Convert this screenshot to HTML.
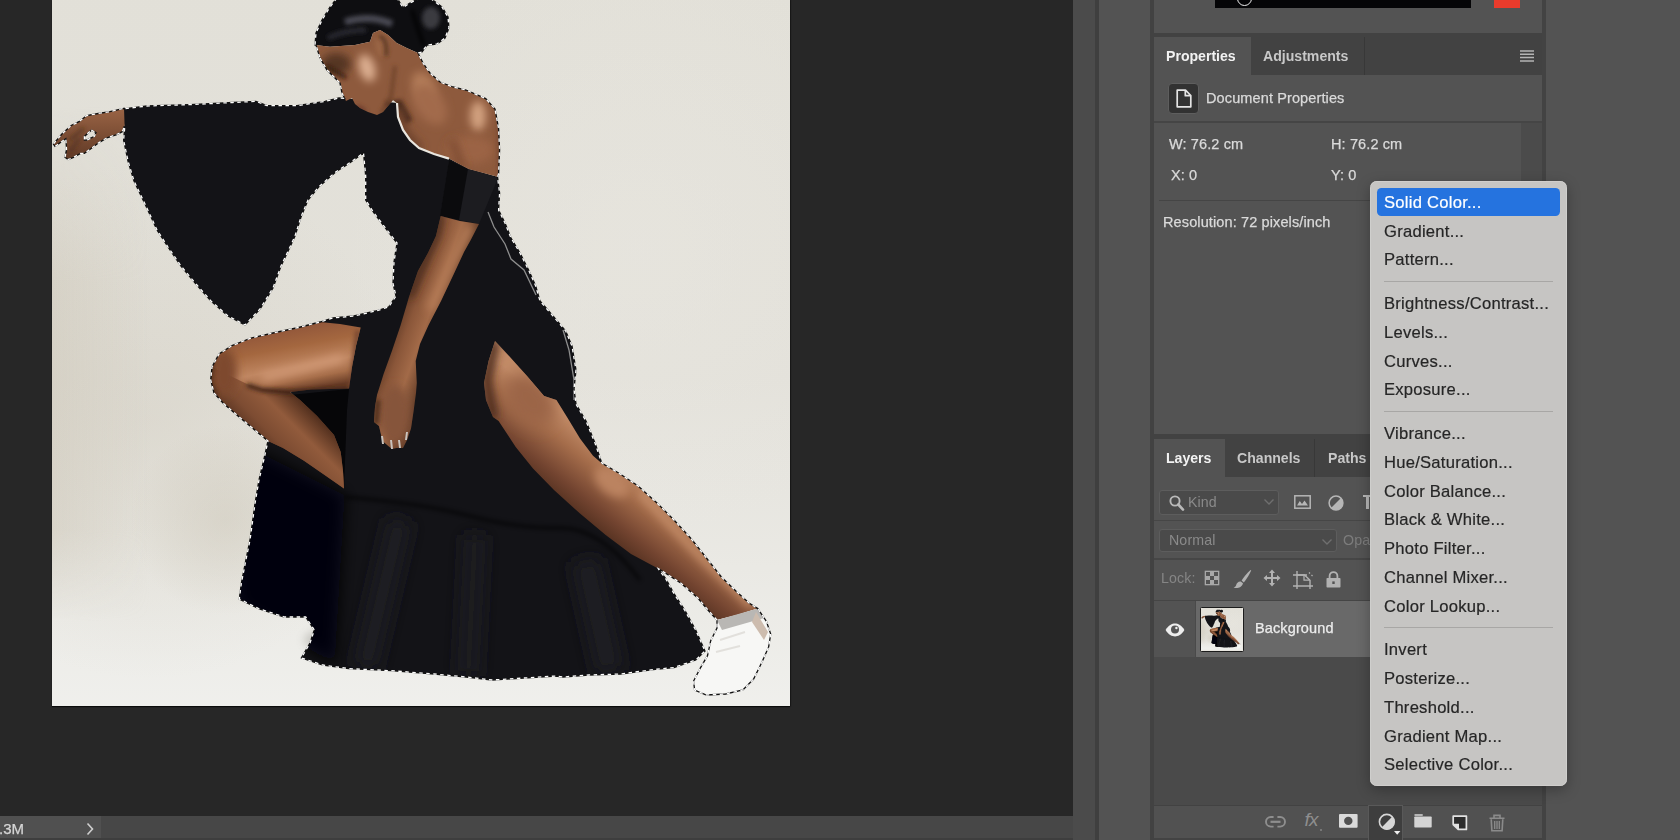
<!DOCTYPE html>
<html><head><meta charset="utf-8">
<style>
*{box-sizing:border-box;margin:0;padding:0}
html,body{width:1680px;height:840px;overflow:hidden;background:#282828;font-family:"Liberation Sans",sans-serif;}
.a{position:absolute}
#canvas{left:0;top:0;width:1073px;height:816px;background:#272727}
#photo{left:52px;top:0;width:738px;height:706px;box-shadow:0 1px 1px #0c0c0c,1px 0 1px #1a1a1a}
#hbar{left:0;top:816px;width:1073px;height:24px;background:#474747;border-bottom:2px solid #3e3e3e}
#hbar .st{left:0;top:0;width:101px;height:22px;background:#505050}
#hbar .t{left:-1px;top:3.5px;font-size:15px;color:#d6d6d6;letter-spacing:0;-webkit-text-stroke:.25px #d6d6d6}
#vbar{left:1073px;top:0;width:22px;height:840px;background:#4b4b4b}
#vline1{left:1095px;top:0;width:4px;height:840px;background:#3f3f3f}
#dock{left:1099px;top:0;width:51px;height:840px;background:#535353}
#vline2{left:1150px;top:0;width:4px;height:840px;background:#424242}
#right{left:1546px;top:0;width:134px;height:840px;background:#535353}
#vline3{left:1542px;top:0;width:4px;height:840px;background:#434343}
.panel{left:1154px;width:388px;background:#535353}
.tabbar{left:1154px;width:388px;height:38px;background:#424242}
.tab{top:0;height:38px;font-weight:bold;font-size:14.1px;color:#c8c8c8;border-right:1px solid #383838;line-height:38px}
.tab.on{background:#535353;color:#f2f2f2;border-right:none}
.tab span{position:absolute;top:0;white-space:nowrap}
.lbl{font-size:14.5px;color:#dadada;white-space:nowrap;letter-spacing:.12px;-webkit-text-stroke:.25px currentColor}
.dim{color:#8a8a8a;-webkit-text-stroke:0 !important}
.lbl,.mi,.tab span,#hbar .t{will-change:transform}
#menu{left:1369.5px;top:180.5px;width:197px;height:605px;background:#c6c5c3;border-radius:7px;box-shadow:0 0 0 .5px #d9d8d6 inset,0 4px 14px rgba(0,0,0,.28)}
#menu .hi{left:7px;top:7px;width:183px;height:28.5px;background:#2573df;border-radius:4.5px}
#menu .mi{left:14px;font-size:16.6px;color:#262626;white-space:nowrap;line-height:20px;letter-spacing:.25px;-webkit-text-stroke:.2px currentColor}
#menu .sep{left:14px;width:169px;height:1.5px;background:#a8a7a5}
</style></head><body>
<div id="canvas" class="a"></div>
<div id="photo" class="a"><!--PHOTO--><svg width="738" height="706" viewBox="52 0 738 706" style="display:block">
<defs>
<linearGradient id="bg" x1="0" y1="0" x2="0" y2="1"><stop offset="0" stop-color="#e2e0d8"/><stop offset=".55" stop-color="#e3e1da"/><stop offset=".8" stop-color="#eae9e4"/><stop offset="1" stop-color="#f0f0ed"/></linearGradient>
<radialGradient id="bgl" cx="150" cy="420" r="260" gradientUnits="userSpaceOnUse"><stop offset="0" stop-color="#c9c2b2" stop-opacity=".3"/><stop offset="1" stop-color="#c9c2b2" stop-opacity="0"/></radialGradient>
<radialGradient id="bgr" cx="640" cy="250" r="300" gradientUnits="userSpaceOnUse"><stop offset="0" stop-color="#eceae4" stop-opacity=".35"/><stop offset="1" stop-color="#eceae4" stop-opacity="0"/></radialGradient>
<linearGradient id="bge" x1="52" y1="0" x2="150" y2="0" gradientUnits="userSpaceOnUse"><stop offset="0" stop-color="#cdc7b9" stop-opacity=".5"/><stop offset="1" stop-color="#cbc4b4" stop-opacity="0"/></linearGradient>
<linearGradient id="bgem" x1="0" y1="0" x2="0" y2="706" gradientUnits="userSpaceOnUse"><stop offset=".15" stop-color="#000"/><stop offset=".4" stop-color="#fff"/><stop offset=".75" stop-color="#fff"/><stop offset=".88" stop-color="#000"/></linearGradient>
<mask id="mbge" maskUnits="userSpaceOnUse" x="52" y="-40" width="738" height="760"><rect x="52" y="-40" width="738" height="760" fill="url(#bgem)"/></mask>
<radialGradient id="bgd" cx="225" cy="520" r="95" gradientUnits="userSpaceOnUse"><stop offset="0" stop-color="#cbc5b6" stop-opacity=".45"/><stop offset="1" stop-color="#c6bfae" stop-opacity="0"/></radialGradient>
<linearGradient id="garm" x1="395" y1="300" x2="445" y2="318" gradientUnits="userSpaceOnUse"><stop offset="0" stop-color="#4a2b1b"/><stop offset=".4" stop-color="#8a5639"/><stop offset=".7" stop-color="#a26a48"/><stop offset="1" stop-color="#68402a"/></linearGradient>
<linearGradient id="gthigh" x1="285" y1="328" x2="297" y2="392" gradientUnits="userSpaceOnUse"><stop offset="0" stop-color="#91563a"/><stop offset=".3" stop-color="#a4673f"/><stop offset=".62" stop-color="#c08762"/><stop offset=".82" stop-color="#a66d49"/><stop offset="1" stop-color="#683c26"/></linearGradient>
<linearGradient id="gcalf" x1="310" y1="400" x2="258" y2="452" gradientUnits="userSpaceOnUse"><stop offset="0" stop-color="#402315"/><stop offset=".4" stop-color="#925b3c"/><stop offset=".7" stop-color="#7d4c32"/><stop offset="1" stop-color="#4e2c1c"/></linearGradient>
<linearGradient id="gleg2" x1="642" y1="476" x2="595" y2="535" gradientUnits="userSpaceOnUse"><stop offset="0" stop-color="#c28b67"/><stop offset=".3" stop-color="#a56d4b"/><stop offset=".7" stop-color="#734430"/><stop offset="1" stop-color="#4e2d1d"/></linearGradient>
<linearGradient id="ghand" x1="0" y1="0" x2="0" y2="1"><stop offset="0" stop-color="#9a6445"/><stop offset="1" stop-color="#603925"/></linearGradient>
<filter id="b2" filterUnits="userSpaceOnUse" x="0" y="-60" width="900" height="820"><feGaussianBlur stdDeviation="2"/></filter>
<filter id="b4" filterUnits="userSpaceOnUse" x="0" y="-60" width="900" height="820"><feGaussianBlur stdDeviation="4"/></filter>
<filter id="b8" filterUnits="userSpaceOnUse" x="0" y="-60" width="900" height="820"><feGaussianBlur stdDeviation="8"/></filter>
<clipPath id="cd"><path d="M122.5 109.0L147.0 106.0L190.0 104.6L233.0 102.5L256.0 101.4L267.0 105.7L297.0 105.7L325.0 101.4L339.0 98.0L370.0 100.0L397.0 103.0L398.0 117.0L403.0 130.0L410.0 140.0L419.0 148.0L434.0 154.0L449.0 158.6L468.6 169.0L497.5 176.8L499.6 193.0L498.6 210.0L505.0 223.0L511.0 238.0L520.0 253.0L528.6 270.0L535.7 286.0L540.0 301.0L553.0 316.0L565.7 331.0L572.0 346.0L576.0 370.0L574.0 389.0L576.0 404.0L586.0 421.0L595.0 443.0L601.4 462.0L630.0 520.0L659.0 570.0L665.7 578.6L674.0 593.6L685.0 610.7L695.7 630.0L705.0 651.0L695.7 660.0L674.0 667.5L653.0 669.6L620.7 674.0L588.6 675.0L563.0 677.0L556.0 676.0L524.0 678.0L492.0 680.0L466.4 677.0L434.3 674.0L391.4 670.7L348.6 668.6L322.9 665.0L301.4 658.0L310.0 643.0L314.3 630.0L305.7 617.0L284.3 617.0L258.6 608.6L239.3 599.0L241.4 583.0L245.7 561.0L250.0 540.0L251.8 527.0L255.0 503.6L259.0 480.0L263.6 460.7L268.0 441.0L290.0 395.0L320.0 322.0L333.0 318.0L354.0 316.0L375.7 311.0L388.6 307.0L396.0 296.0L393.0 283.6L394.0 262.0L397.0 243.0L387.0 230.0L374.0 213.0L365.7 200.0L365.7 176.0L363.5 153.0L348.5 163.6L335.7 172.0L318.6 187.0L308.0 200.0L301.0 217.0L295.0 236.0L290.0 247.0L281.0 266.0L273.0 288.0L260.0 309.0L245.0 325.0L228.0 316.0L211.0 301.0L196.0 284.0L181.0 266.0L168.0 247.0L157.0 230.0L145.0 204.0L134.0 181.0L128.0 161.0L123.6 140.0L124.6 129.0Z"/></clipPath>
<clipPath id="cf"><path d="M316.0 45.0L320.0 58.0L327.0 70.0L335.0 78.0L340.0 83.0L342.0 93.0L346.0 101.0L352.0 98.0L355.0 104.0L360.0 108.0L368.0 112.0L377.0 115.0L383.0 112.0L393.0 100.0L397.0 103.0L398.0 117.0L403.0 130.0L410.0 140.0L419.0 148.0L434.0 154.0L449.0 158.6L468.6 169.0L497.5 176.8L498.6 173.6L499.6 150.0L498.6 128.6L495.0 109.0L485.7 98.6L466.0 90.0L453.0 87.0L440.0 82.0L430.0 73.0L423.0 63.0L418.0 53.0L406.7 48.0L396.7 43.0L390.0 36.7L388.0 35.0L380.0 30.0L373.0 33.0L370.0 41.7L355.0 45.0L330.0 46.7Z"/></clipPath>
<clipPath id="ch"><path d="M315.0 45.0L316.0 33.0L322.0 20.0L330.0 7.0L337.0 -2.0L397.0 -2.0L403.0 7.5L410.0 3.0L420.0 -2.0L430.0 -2.0L442.0 7.0L448.0 17.0L449.0 28.0L445.0 38.0L437.0 44.0L427.0 45.0L422.0 52.0L418.0 53.0L406.7 48.0L396.7 43.0L390.0 36.7L388.0 35.0L380.0 30.0L373.0 33.0L370.0 41.7L355.0 45.0L330.0 46.7Z"/></clipPath>
<clipPath id="cl1"><path d="M320.0 322.0L298.6 327.5L273.0 333.0L251.0 338.0L232.0 345.7L219.0 354.0L212.0 367.0L210.7 380.0L214.0 393.0L223.0 403.0L238.0 416.0L253.0 428.6L268.0 441.0L283.0 448.0L304.0 460.7L325.7 475.7L344.0 488.6L343.0 471.0L340.7 452.0L334.0 435.0L317.0 416.0L300.0 400.0L290.0 392.0L311.0 389.6L349.0 388.6L352.0 367.0L356.0 345.7L360.7 327.5L340.0 324.0Z"/></clipPath>
<clipPath id="cl2"><path d="M495.0 341.0L488.6 361.0L484.0 383.0L486.0 400.0L493.0 417.0L498.6 421.0L515.7 447.0L533.0 468.6L554.0 490.0L580.0 513.6L605.7 535.0L631.0 554.0L659.0 569.0L680.7 583.0L697.8 598.0L708.6 610.7L717.0 620.0L737.0 615.0L757.8 608.6L749.0 603.0L736.4 591.4L721.4 577.0L706.4 558.0L691.4 539.0L674.0 520.0L657.0 503.0L637.8 485.7L618.6 473.0L601.4 463.0L593.0 455.7L580.0 438.6L567.0 417.0L556.4 400.0L544.0 396.0L527.0 376.0L510.0 357.0Z"/></clipPath>
<clipPath id="ca"><path d="M440.7 216.0L436.0 236.0L428.0 253.0L418.0 271.0L409.0 297.0L400.7 325.0L392.0 350.7L383.6 374.0L377.0 395.0L375.0 407.0L374.0 422.0L379.0 426.0L382.5 441.0L388.0 445.7L392.0 449.0L396.4 448.0L403.0 448.0L407.0 440.0L411.0 428.6L413.6 411.0L416.0 393.0L416.8 383.0L415.7 361.0L420.0 344.0L428.6 325.0L441.0 301.0L454.0 273.6L464.0 252.0L470.7 240.0L479.0 224.0L460.0 221.0Z"/></clipPath>
</defs>
<g id="figall">
<rect x="52" y="-40" width="738" height="760" fill="url(#bg)"/>
<rect x="52" y="-40" width="738" height="760" fill="url(#bgl)"/>
<rect x="52" y="-40" width="738" height="760" fill="url(#bgr)"/>
<rect x="52" y="-40" width="100" height="760" fill="url(#bge)" mask="url(#mbge)"/>
<rect x="120" y="400" width="220" height="240" fill="url(#bgd)"/>
<ellipse cx="338" cy="640" rx="34" ry="12" fill="#8f8d86" opacity=".4" filter="url(#b4)"/>
<path d="M122.5 109.0L147.0 106.0L190.0 104.6L233.0 102.5L256.0 101.4L267.0 105.7L297.0 105.7L325.0 101.4L339.0 98.0L370.0 100.0L397.0 103.0L398.0 117.0L403.0 130.0L410.0 140.0L419.0 148.0L434.0 154.0L449.0 158.6L468.6 169.0L497.5 176.8L499.6 193.0L498.6 210.0L505.0 223.0L511.0 238.0L520.0 253.0L528.6 270.0L535.7 286.0L540.0 301.0L553.0 316.0L565.7 331.0L572.0 346.0L576.0 370.0L574.0 389.0L576.0 404.0L586.0 421.0L595.0 443.0L601.4 462.0L630.0 520.0L659.0 570.0L665.7 578.6L674.0 593.6L685.0 610.7L695.7 630.0L705.0 651.0L695.7 660.0L674.0 667.5L653.0 669.6L620.7 674.0L588.6 675.0L563.0 677.0L556.0 676.0L524.0 678.0L492.0 680.0L466.4 677.0L434.3 674.0L391.4 670.7L348.6 668.6L322.9 665.0L301.4 658.0L310.0 643.0L314.3 630.0L305.7 617.0L284.3 617.0L258.6 608.6L239.3 599.0L241.4 583.0L245.7 561.0L250.0 540.0L251.8 527.0L255.0 503.6L259.0 480.0L263.6 460.7L268.0 441.0L290.0 395.0L320.0 322.0L333.0 318.0L354.0 316.0L375.7 311.0L388.6 307.0L396.0 296.0L393.0 283.6L394.0 262.0L397.0 243.0L387.0 230.0L374.0 213.0L365.7 200.0L365.7 176.0L363.5 153.0L348.5 163.6L335.7 172.0L318.6 187.0L308.0 200.0L301.0 217.0L295.0 236.0L290.0 247.0L281.0 266.0L273.0 288.0L260.0 309.0L245.0 325.0L228.0 316.0L211.0 301.0L196.0 284.0L181.0 266.0L168.0 247.0L157.0 230.0L145.0 204.0L134.0 181.0L128.0 161.0L123.6 140.0L124.6 129.0Z" fill="#131317"/>
<g clip-path="url(#cd)">
<path d="M236 440 L345 495 L335 665 L236 605z" fill="#050507" filter="url(#b8)"/>
<path d="M400 520 L365 668" stroke="#1c1c21" stroke-width="26" filter="url(#b8)" fill="none"/>
<path d="M475 535 L468 676" stroke="#1b1b20" stroke-width="22" filter="url(#b8)" fill="none"/>
<path d="M585 560 L610 672" stroke="#1c1c21" stroke-width="30" filter="url(#b8)" fill="none"/>
<path d="M344 497 Q420 503 470 516 T560 528 T640 580" fill="none" stroke="#040405" stroke-width="2.5" opacity=".8" filter="url(#b2)"/>
<path d="M449 160 L440 216 L479 224 L498 178z" fill="#1c1c20"/>
<path d="M449 160 L440 216 L459 220 L468 169z" fill="#0b0b0d"/>
<path d="M488 212 L494 227 L505 244 L511 259 L524 270 L536 295" fill="none" stroke="#8d8d8d" stroke-width="1.3"/>
<path d="M563 330 L569 350 L574 380 L574 400" fill="none" stroke="#8d8d8d" stroke-width="1.3"/>
<path d="M290 395 L349 389 L347 410 L344 488 L300 400z" fill="#060608"/>
</g>
<path d="M315.0 45.0L316.0 33.0L322.0 20.0L330.0 7.0L337.0 -2.0L397.0 -2.0L403.0 7.5L410.0 3.0L420.0 -2.0L430.0 -2.0L442.0 7.0L448.0 17.0L449.0 28.0L445.0 38.0L437.0 44.0L427.0 45.0L422.0 52.0L418.0 53.0L406.7 48.0L396.7 43.0L390.0 36.7L388.0 35.0L380.0 30.0L373.0 33.0L370.0 41.7L355.0 45.0L330.0 46.7Z" fill="#0e0e11"/>
<g clip-path="url(#ch)">
<path d="M345 22 Q370 14 392 24" stroke="#4a4a52" stroke-width="7" fill="none" filter="url(#b2)"/>
<path d="M328 38 Q345 30 366 30" stroke="#2a2a30" stroke-width="5" fill="none" filter="url(#b2)"/>
<ellipse cx="431" cy="18" rx="9" ry="11" fill="#3a3a41" filter="url(#b2)"/>
<path d="M412 10 Q418 30 424 46" stroke="#000" stroke-width="3" fill="none" filter="url(#b2)"/>
</g>
<path d="M316.0 45.0L320.0 58.0L327.0 70.0L335.0 78.0L340.0 83.0L342.0 93.0L346.0 101.0L352.0 98.0L355.0 104.0L360.0 108.0L368.0 112.0L377.0 115.0L383.0 112.0L393.0 100.0L397.0 103.0L398.0 117.0L403.0 130.0L410.0 140.0L419.0 148.0L434.0 154.0L449.0 158.6L468.6 169.0L497.5 176.8L498.6 173.6L499.6 150.0L498.6 128.6L495.0 109.0L485.7 98.6L466.0 90.0L453.0 87.0L440.0 82.0L430.0 73.0L423.0 63.0L418.0 53.0L406.7 48.0L396.7 43.0L390.0 36.7L388.0 35.0L380.0 30.0L373.0 33.0L370.0 41.7L355.0 45.0L330.0 46.7Z" fill="#8e5a3d"/>
<g clip-path="url(#cf)">
<ellipse cx="336" cy="64" rx="15" ry="11" fill="#553423" filter="url(#b4)"/>
<path d="M326 66 L340 74 L346 78" stroke="#2a1810" stroke-width="3" fill="none" filter="url(#b2)"/>
<ellipse cx="367" cy="68" rx="8" ry="14" transform="rotate(-18 367 68)" fill="#dcae90" filter="url(#b4)"/>
<ellipse cx="382" cy="44" rx="7" ry="13" fill="#9a6544" filter="url(#b2)"/>
<path d="M379 36 Q388 38 386 56" stroke="#4a2a1b" stroke-width="3" fill="none" filter="url(#b2)"/>
<path d="M356 106 L366 111" stroke="#6d3b2c" stroke-width="4" fill="none" filter="url(#b2)"/>
<path d="M386 106 L399 104 L409 122" stroke="#4a2c1d" stroke-width="8" fill="none" filter="url(#b2)"/>
<ellipse cx="424" cy="88" rx="11" ry="17" transform="rotate(-25 424 88)" fill="#b27b58" filter="url(#b4)"/>
<path d="M381 114 L391 97 L395 66" stroke="#6e432c" stroke-width="3.5" fill="none" filter="url(#b2)"/>
<path d="M399 108 L404 132 L420 150" stroke="#6b412b" stroke-width="9" fill="none" filter="url(#b4)"/>
<ellipse cx="430" cy="105" rx="14" ry="22" transform="rotate(-35 430 105)" fill="#a26b4b" filter="url(#b4)"/>
<ellipse cx="478" cy="116" rx="8" ry="15" fill="#d3a280" filter="url(#b4)"/>
<ellipse cx="470" cy="150" rx="24" ry="14" fill="#9b6445" filter="url(#b4)"/>
<path d="M499 110 L500 176" stroke="#7a4930" stroke-width="5" fill="none" filter="url(#b2)"/>
<path d="M452 140 L462 168" stroke="#7d4c32" stroke-width="8" fill="none" filter="url(#b4)"/>
</g>
<path d="M397 103 L398 117 L403 130 L410 140 L419 148 L434 154 L449 158.6" fill="none" stroke="#e9e6df" stroke-width="2.2"/>
<path d="M124.0 108.3L110.0 111.6L98.3 113.5L86.7 115.5L79.0 121.7L71.2 125.5L61.9 134.0L53.4 144.0L55.0 146.4L65.8 138.7L66.6 149.5L65.0 157.3L68.1 159.6L73.5 157.3L80.5 153.4L84.4 153.4L89.8 149.5L99.0 142.6L106.8 137.9L116.0 134.8L122.3 131.7L124.6 125.5ZM84.4 136.4L91.3 130.2L96.0 132.5L94.4 136.4L86.7 140.2L84.4 140.2Z" fill-rule="evenodd" fill="url(#ghand)"/>
<path d="M70 140 L84 128 M70 152 L80 138" stroke="#4a2b1c" stroke-width="2" filter="url(#b2)" fill="none"/>
<path d="M440.7 216.0L436.0 236.0L428.0 253.0L418.0 271.0L409.0 297.0L400.7 325.0L392.0 350.7L383.6 374.0L377.0 395.0L375.0 407.0L374.0 422.0L379.0 426.0L382.5 441.0L388.0 445.7L392.0 449.0L396.4 448.0L403.0 448.0L407.0 440.0L411.0 428.6L413.6 411.0L416.0 393.0L416.8 383.0L415.7 361.0L420.0 344.0L428.6 325.0L441.0 301.0L454.0 273.6L464.0 252.0L470.7 240.0L479.0 224.0L460.0 221.0Z" fill="url(#garm)"/>
<g clip-path="url(#ca)">
<path d="M470 226 L452 262 L430 310" stroke="#b57b57" stroke-width="9" fill="none" filter="url(#b4)"/>
<path d="M440 216 L436 236 L428 253 L409 297" stroke="#4a2b1b" stroke-width="8" fill="none" filter="url(#b4)"/>
<ellipse cx="395" cy="415" rx="16" ry="30" fill="#86543a" filter="url(#b4)"/>
<path d="M378 400 L376 424" stroke="#4e2d1e" stroke-width="5" fill="none" filter="url(#b2)"/>
</g>
<path d="M382 436 l1 8 M391 440 l1 9 M399 440 l1 8 M407 432 l-1 8" stroke="#c9c3bd" stroke-width="2" fill="none"/>
<path d="M320.0 322.0L298.6 327.5L273.0 333.0L251.0 338.0L232.0 345.7L219.0 354.0L212.0 367.0L210.7 380.0L214.0 393.0L223.0 403.0L238.0 416.0L253.0 428.6L268.0 441.0L283.0 448.0L304.0 460.7L325.7 475.7L344.0 488.6L343.0 471.0L340.7 452.0L334.0 435.0L317.0 416.0L300.0 400.0L290.0 392.0L311.0 389.6L349.0 388.6L352.0 367.0L356.0 345.7L360.7 327.5L340.0 324.0Z" fill="url(#gthigh)"/>
<path d="M212 367 L210.7 380 L214 393 L223 403 L238 416 L253 428.6 L268 441 L283 448 L304 460.7 L325.7 475.7 L344 488.6 L343 471 L340.7 452 L334 435 L317 416 L300 400 L290 392 L262 389 L247 384z" fill="url(#gcalf)"/>
<g clip-path="url(#cl1)">
<path d="M247 385 L262 390 L290 392 L349 389" stroke="#3e2315" stroke-width="4" fill="none" filter="url(#b2)"/>
<ellipse cx="224" cy="372" rx="13" ry="24" fill="#7e4a2e" filter="url(#b4)"/>
<path d="M213 360 L210 382 L216 396" stroke="#56321f" stroke-width="5" fill="none" filter="url(#b2)"/>
<path d="M358 330 L352 388" stroke="#7a4a30" stroke-width="6" fill="none" filter="url(#b2)"/>
<path d="M262 378 L300 369 L343 358" stroke="#d09875" stroke-width="8" fill="none" filter="url(#b4)"/>
</g>
<path d="M495.0 341.0L488.6 361.0L484.0 383.0L486.0 400.0L493.0 417.0L498.6 421.0L515.7 447.0L533.0 468.6L554.0 490.0L580.0 513.6L605.7 535.0L631.0 554.0L659.0 569.0L680.7 583.0L697.8 598.0L708.6 610.7L717.0 620.0L737.0 615.0L757.8 608.6L749.0 603.0L736.4 591.4L721.4 577.0L706.4 558.0L691.4 539.0L674.0 520.0L657.0 503.0L637.8 485.7L618.6 473.0L601.4 463.0L593.0 455.7L580.0 438.6L567.0 417.0L556.4 400.0L544.0 396.0L527.0 376.0L510.0 357.0Z" fill="url(#gleg2)"/>
<g clip-path="url(#cl2)">
<path d="M495 341 L487 380 L494 418" stroke="#4a2a1b" stroke-width="9" fill="none" filter="url(#b4)"/>
<ellipse cx="530" cy="400" rx="22" ry="30" transform="rotate(-40 530 400)" fill="#9b6546" filter="url(#b8)"/>
<ellipse cx="612" cy="482" rx="20" ry="12" transform="rotate(38 612 482)" fill="#bb8360" filter="url(#b4)"/>
<path d="M640 492 L700 556 L752 606" stroke="#c48d69" stroke-width="7" fill="none" filter="url(#b4)"/>
</g>
<path d="M717.0 620.0L737.0 615.0L757.8 608.6L766.4 621.4L770.7 634.0L768.6 647.0L762.0 662.0L753.6 679.0L742.9 690.0L725.7 694.0L706.4 695.0L694.6 690.0L693.6 681.0L700.0 668.6L707.5 655.7L710.7 640.7L717.0 628.0Z" fill="#f7f7f5"/>
<path d="M717 620 L757.8 608.6 L764 618 L722 630z" fill="#b9b7b4"/>
<path d="M756 612 L768 632 L764 640 L752 622z" fill="#cdbcae"/>
<path d="M720 640 L745 632 M716 652 L740 646" stroke="#e2e0dc" stroke-width="2" fill="none"/>
</g>
<path d="M320.0 58.0L327.0 70.0L327.0 70.0L327.0 70.0L327.0 70.0L340.0 83.0L342.0 93.0L342.0 93.0L342.0 93.0L342.0 93.0L344.7 98.4L339.0 98.0L339.0 98.0L339.0 98.0L339.0 98.0L325.0 101.4L297.0 105.7L267.0 105.7L256.0 101.4L256.0 101.4L256.0 101.4L256.0 101.4L256.0 101.4L233.0 102.5L233.0 102.5L190.0 104.6L147.0 106.0L147.0 106.0L124.0 108.8L124.0 108.3L124.0 108.3L124.0 108.3L124.0 108.3L124.0 108.3L124.0 108.3L124.0 108.3L124.0 108.3L124.0 108.3L124.0 108.3L124.0 108.3L124.0 108.3L124.0 108.3L124.0 108.3L124.0 108.3L124.0 108.3L124.0 108.3L124.0 108.3L124.0 108.3L110.0 111.6L98.3 113.5L98.3 113.5L86.7 115.5L86.7 115.5L86.7 115.5L86.7 115.5L86.7 115.5L86.7 115.5L79.0 121.7L71.2 125.5L71.2 125.5L71.2 125.5L71.2 125.5L61.9 134.0L61.9 134.0L53.4 144.0L53.4 144.0L53.4 144.0L53.4 144.0L53.4 144.0L53.4 144.0L53.4 144.0L53.4 144.0L53.4 144.0L53.4 144.0L53.4 144.0L53.4 144.0L53.4 144.0L53.4 144.0L55.0 146.4L55.0 146.4L55.0 146.4L55.0 146.4L55.0 146.4L55.0 146.4L55.0 146.4L55.0 146.4L55.0 146.4L55.0 146.4L55.0 146.4L55.0 146.4L55.0 146.4L55.0 146.4L55.0 146.4L55.0 146.4L55.0 146.4L65.8 138.7L66.6 149.5L65.0 157.3L65.0 157.3L65.0 157.3L65.0 157.3L65.0 157.3L65.0 157.3L65.0 157.3L65.0 157.3L65.0 157.3L65.0 157.3L65.0 157.3L65.0 157.3L65.0 157.3L68.1 159.6L68.1 159.6L68.1 159.6L68.1 159.6L68.1 159.6L68.1 159.6L68.1 159.6L68.1 159.6L68.1 159.6L68.1 159.6L68.1 159.6L68.1 159.6L73.5 157.3L73.5 157.3L80.5 153.4L84.4 153.4L84.4 153.4L84.4 153.4L84.4 153.4L84.4 153.4L84.4 153.4L84.4 153.4L89.8 149.5L89.8 149.5L99.0 142.6L106.8 137.9L116.0 134.8L116.0 134.8L122.3 131.7L122.3 131.7L122.3 131.7L122.3 131.7L122.3 131.7L122.3 131.7L122.3 131.7L122.3 131.7L122.3 131.7L124.3 126.3L124.6 129.0L123.6 140.0L123.6 140.0L123.6 140.0L123.6 140.0L128.0 161.0L128.0 161.0L134.0 181.0L134.0 181.0L134.0 181.0L145.0 204.0L157.0 230.0L157.0 230.0L168.0 247.0L168.0 247.0L181.0 266.0L181.0 266.0L196.0 284.0L196.0 284.0L211.0 301.0L211.0 301.0L228.0 316.0L228.0 316.0L228.0 316.0L245.0 325.0L245.0 325.0L245.0 325.0L245.0 325.0L245.0 325.0L245.0 325.0L245.0 325.0L245.0 325.0L245.0 325.0L245.0 325.0L245.0 325.0L245.0 325.0L245.0 325.0L245.0 325.0L260.0 309.0L260.0 309.0L260.0 309.0L273.0 288.0L273.0 288.0L273.0 288.0L281.0 266.0L290.0 247.0L290.0 247.0L295.0 236.0L295.0 236.0L301.0 217.0L308.0 200.0L318.6 187.0L335.7 172.0L348.5 163.6L348.5 163.6L363.5 153.0L365.7 176.0L365.7 200.0L365.7 200.0L365.7 200.0L365.7 200.0L365.7 200.0L365.7 200.0L365.7 200.0L374.0 213.0L374.0 213.0L387.0 230.0L387.0 230.0L397.0 243.0L394.0 262.0L394.0 262.0L393.0 283.6L393.0 283.6L393.0 283.6L393.0 283.6L396.0 296.0L388.6 307.0L375.7 311.0L354.0 316.0L333.0 318.0L333.0 318.0L333.0 318.0L320.0 322.0L298.6 327.5L273.0 333.0L273.0 333.0L251.0 338.0L251.0 338.0L251.0 338.0L232.0 345.7L232.0 345.7L232.0 345.7L219.0 354.0L219.0 354.0L219.0 354.0L219.0 354.0L219.0 354.0L219.0 354.0L212.0 367.0L212.0 367.0L212.0 367.0L212.0 367.0L212.0 367.0L210.7 380.0L210.7 380.0L210.7 380.0L210.7 380.0L210.7 380.0L214.0 393.0L214.0 393.0L214.0 393.0L214.0 393.0L214.0 393.0L214.0 393.0L223.0 403.0L223.0 403.0L238.0 416.0L238.0 416.0L253.0 428.6L253.0 428.6L268.0 441.0L263.6 460.7L259.0 480.0L259.0 480.0L255.0 503.6L255.0 503.6L251.8 527.0L250.0 540.0L245.7 561.0L245.7 561.0L241.4 583.0L241.4 583.0L239.3 599.0L239.3 599.0L239.3 599.0L239.3 599.0L239.3 599.0L239.3 599.0L239.3 599.0L239.3 599.0L239.3 599.0L239.3 599.0L239.3 599.0L239.3 599.0L239.3 599.0L239.3 599.0L258.6 608.6L258.6 608.6L284.3 617.0L284.3 617.0L284.3 617.0L284.3 617.0L305.7 617.0L314.3 630.0L310.0 643.0L301.4 658.0L301.4 658.0L301.4 658.0L301.4 658.0L301.4 658.0L301.4 658.0L301.4 658.0L301.4 658.0L301.4 658.0L301.4 658.0L301.4 658.0L301.4 658.0L301.4 658.0L301.4 658.0L301.4 658.0L301.4 658.0L301.4 658.0L301.4 658.0L301.4 658.0L322.9 665.0L322.9 665.0L322.9 665.0L348.6 668.6L348.6 668.6L391.4 670.7L434.3 674.0L466.4 677.0L492.0 680.0L492.0 680.0L492.0 680.0L556.0 676.0L563.0 677.0L563.0 677.0L563.0 677.0L588.6 675.0L620.7 674.0L620.7 674.0L653.0 669.6L674.0 667.5L674.0 667.5L674.0 667.5L695.7 660.0L695.7 660.0L695.7 660.0L695.7 660.0L695.7 660.0L705.0 651.0L705.0 651.0L705.0 651.0L705.0 651.0L705.0 651.0L705.0 651.0L705.0 651.0L705.0 651.0L705.0 651.0L705.0 651.0L705.0 651.0L705.0 651.0L705.0 651.0L695.7 630.0L695.7 630.0L685.0 610.7L685.0 610.7L674.0 593.6L665.7 578.6L665.7 578.6L665.7 578.6L659.0 570.0L658.2 568.6L659.0 569.0L680.7 583.0L697.8 598.0L708.6 610.7L708.6 610.7L717.0 620.0L717.0 628.0L710.7 640.7L710.7 640.7L710.7 640.7L710.7 640.7L707.5 655.7L700.0 668.6L700.0 668.6L693.6 681.0L693.6 681.0L693.6 681.0L693.6 681.0L693.6 681.0L693.6 681.0L693.6 681.0L694.6 690.0L694.6 690.0L694.6 690.0L694.6 690.0L694.6 690.0L694.6 690.0L694.6 690.0L694.6 690.0L694.6 690.0L694.6 690.0L694.6 690.0L694.6 690.0L706.4 695.0L706.4 695.0L706.4 695.0L706.4 695.0L706.4 695.0L706.4 695.0L725.7 694.0L725.7 694.0L725.7 694.0L742.9 690.0L742.9 690.0L742.9 690.0L742.9 690.0L742.9 690.0L742.9 690.0L742.9 690.0L753.6 679.0L753.6 679.0L753.6 679.0L753.6 679.0L762.0 662.0L762.0 662.0L768.6 647.0L768.6 647.0L768.6 647.0L768.6 647.0L770.7 634.0L770.7 634.0L770.7 634.0L770.7 634.0L770.7 634.0L770.7 634.0L766.4 621.4L766.4 621.4L766.4 621.4L766.4 621.4L757.8 608.6L757.8 608.6L757.8 608.6L757.8 608.6L757.8 608.6L757.8 608.6L757.8 608.6L757.8 608.6L757.8 608.6L757.8 608.6L757.8 608.6L757.8 608.6L757.8 608.6L757.8 608.6L757.8 608.6L757.8 608.6L757.8 608.6L757.8 608.6L757.8 608.6L749.0 603.0L736.4 591.4L721.4 577.0L691.4 539.0L691.4 539.0L674.0 520.0L674.0 520.0L657.0 503.0L657.0 503.0L637.8 485.7L637.8 485.7L637.8 485.7L618.6 473.0L618.6 473.0L602.1 463.4L601.4 462.0L595.0 443.0L595.0 443.0L586.0 421.0L586.0 421.0L576.0 404.0L574.0 389.0L576.0 370.0L576.0 370.0L576.0 370.0L576.0 370.0L572.0 346.0L572.0 346.0L572.0 346.0L565.7 331.0L565.7 331.0L565.7 331.0L565.7 331.0L553.0 316.0L553.0 316.0L540.0 301.0L535.7 286.0L535.7 286.0L528.6 270.0L528.6 270.0L520.0 253.0L520.0 253.0L511.0 238.0L505.0 223.0L505.0 223.0L498.6 210.0L499.6 193.0L499.6 193.0L499.6 193.0L497.5 176.8L498.6 173.6L498.6 173.6L498.6 173.6L498.6 173.6L499.6 150.0L499.6 150.0L498.6 128.6L498.6 128.6L495.0 109.0L495.0 109.0L495.0 109.0L495.0 109.0L495.0 109.0L495.0 109.0L495.0 109.0L485.7 98.6L485.7 98.6L485.7 98.6L485.7 98.6L485.7 98.6L466.0 90.0L466.0 90.0L466.0 90.0L453.0 87.0L440.0 82.0L430.0 73.0L423.0 63.0L418.0 53.0L422.0 52.0L422.0 52.0L422.0 52.0L422.0 52.0L422.0 52.0L422.0 52.0L422.0 52.0L422.0 52.0L427.0 45.0L437.0 44.0L437.0 44.0L437.0 44.0L437.0 44.0L437.0 44.0L437.0 44.0L437.0 44.0L445.0 38.0L445.0 38.0L445.0 38.0L445.0 38.0L445.0 38.0L445.0 38.0L445.0 38.0L449.0 28.0L449.0 28.0L449.0 28.0L449.0 28.0L449.0 28.0L449.0 28.0L448.0 17.0L448.0 17.0L448.0 17.0L448.0 17.0L448.0 17.0L448.0 17.0L442.0 7.0L442.0 7.0L442.0 7.0L442.0 7.0L442.0 7.0L430.0 -2.0L430.0 -2.0L430.0 -2.0L430.0 -2.0L430.0 -2.0L430.0 -2.0L430.0 -2.0L430.0 -2.0L420.0 -2.0L420.0 -2.0L420.0 -2.0L420.0 -2.0L420.0 -2.0L420.0 -2.0L410.0 3.0L410.0 3.0L403.0 7.5L397.0 -2.0L397.0 -2.0L397.0 -2.0L397.0 -2.0L397.0 -2.0L397.0 -2.0L397.0 -2.0L397.0 -2.0L397.0 -2.0L397.0 -2.0L397.0 -2.0L337.0 -2.0L337.0 -2.0L337.0 -2.0L337.0 -2.0L337.0 -2.0L337.0 -2.0L337.0 -2.0L337.0 -2.0L337.0 -2.0L337.0 -2.0L330.0 7.0L330.0 7.0L322.0 20.0L322.0 20.0L316.0 33.0L316.0 33.0L316.0 33.0L316.0 33.0L316.0 33.0L315.0 45.0L315.0 45.0L315.0 45.0L315.0 45.0L315.0 45.0L315.0 45.0L315.0 45.0L315.0 45.0L315.0 45.0L315.0 45.0L315.0 45.0L315.0 45.0L315.0 45.0L315.0 45.0L315.0 45.0L315.0 45.0L315.0 45.0L316.0 45.1L320.0 58.0L320.0 58.0ZM91.3 130.2L96.0 132.5L94.4 136.4L86.7 140.2L84.4 140.2L84.4 136.4Z" fill="none" stroke="#111" stroke-width="1.3"/>
<path d="M320.0 58.0L327.0 70.0L327.0 70.0L327.0 70.0L327.0 70.0L340.0 83.0L342.0 93.0L342.0 93.0L342.0 93.0L342.0 93.0L344.7 98.4L339.0 98.0L339.0 98.0L339.0 98.0L339.0 98.0L325.0 101.4L297.0 105.7L267.0 105.7L256.0 101.4L256.0 101.4L256.0 101.4L256.0 101.4L256.0 101.4L233.0 102.5L233.0 102.5L190.0 104.6L147.0 106.0L147.0 106.0L124.0 108.8L124.0 108.3L124.0 108.3L124.0 108.3L124.0 108.3L124.0 108.3L124.0 108.3L124.0 108.3L124.0 108.3L124.0 108.3L124.0 108.3L124.0 108.3L124.0 108.3L124.0 108.3L124.0 108.3L124.0 108.3L124.0 108.3L124.0 108.3L124.0 108.3L124.0 108.3L110.0 111.6L98.3 113.5L98.3 113.5L86.7 115.5L86.7 115.5L86.7 115.5L86.7 115.5L86.7 115.5L86.7 115.5L79.0 121.7L71.2 125.5L71.2 125.5L71.2 125.5L71.2 125.5L61.9 134.0L61.9 134.0L53.4 144.0L53.4 144.0L53.4 144.0L53.4 144.0L53.4 144.0L53.4 144.0L53.4 144.0L53.4 144.0L53.4 144.0L53.4 144.0L53.4 144.0L53.4 144.0L53.4 144.0L53.4 144.0L55.0 146.4L55.0 146.4L55.0 146.4L55.0 146.4L55.0 146.4L55.0 146.4L55.0 146.4L55.0 146.4L55.0 146.4L55.0 146.4L55.0 146.4L55.0 146.4L55.0 146.4L55.0 146.4L55.0 146.4L55.0 146.4L55.0 146.4L65.8 138.7L66.6 149.5L65.0 157.3L65.0 157.3L65.0 157.3L65.0 157.3L65.0 157.3L65.0 157.3L65.0 157.3L65.0 157.3L65.0 157.3L65.0 157.3L65.0 157.3L65.0 157.3L65.0 157.3L68.1 159.6L68.1 159.6L68.1 159.6L68.1 159.6L68.1 159.6L68.1 159.6L68.1 159.6L68.1 159.6L68.1 159.6L68.1 159.6L68.1 159.6L68.1 159.6L73.5 157.3L73.5 157.3L80.5 153.4L84.4 153.4L84.4 153.4L84.4 153.4L84.4 153.4L84.4 153.4L84.4 153.4L84.4 153.4L89.8 149.5L89.8 149.5L99.0 142.6L106.8 137.9L116.0 134.8L116.0 134.8L122.3 131.7L122.3 131.7L122.3 131.7L122.3 131.7L122.3 131.7L122.3 131.7L122.3 131.7L122.3 131.7L122.3 131.7L124.3 126.3L124.6 129.0L123.6 140.0L123.6 140.0L123.6 140.0L123.6 140.0L128.0 161.0L128.0 161.0L134.0 181.0L134.0 181.0L134.0 181.0L145.0 204.0L157.0 230.0L157.0 230.0L168.0 247.0L168.0 247.0L181.0 266.0L181.0 266.0L196.0 284.0L196.0 284.0L211.0 301.0L211.0 301.0L228.0 316.0L228.0 316.0L228.0 316.0L245.0 325.0L245.0 325.0L245.0 325.0L245.0 325.0L245.0 325.0L245.0 325.0L245.0 325.0L245.0 325.0L245.0 325.0L245.0 325.0L245.0 325.0L245.0 325.0L245.0 325.0L245.0 325.0L260.0 309.0L260.0 309.0L260.0 309.0L273.0 288.0L273.0 288.0L273.0 288.0L281.0 266.0L290.0 247.0L290.0 247.0L295.0 236.0L295.0 236.0L301.0 217.0L308.0 200.0L318.6 187.0L335.7 172.0L348.5 163.6L348.5 163.6L363.5 153.0L365.7 176.0L365.7 200.0L365.7 200.0L365.7 200.0L365.7 200.0L365.7 200.0L365.7 200.0L365.7 200.0L374.0 213.0L374.0 213.0L387.0 230.0L387.0 230.0L397.0 243.0L394.0 262.0L394.0 262.0L393.0 283.6L393.0 283.6L393.0 283.6L393.0 283.6L396.0 296.0L388.6 307.0L375.7 311.0L354.0 316.0L333.0 318.0L333.0 318.0L333.0 318.0L320.0 322.0L298.6 327.5L273.0 333.0L273.0 333.0L251.0 338.0L251.0 338.0L251.0 338.0L232.0 345.7L232.0 345.7L232.0 345.7L219.0 354.0L219.0 354.0L219.0 354.0L219.0 354.0L219.0 354.0L219.0 354.0L212.0 367.0L212.0 367.0L212.0 367.0L212.0 367.0L212.0 367.0L210.7 380.0L210.7 380.0L210.7 380.0L210.7 380.0L210.7 380.0L214.0 393.0L214.0 393.0L214.0 393.0L214.0 393.0L214.0 393.0L214.0 393.0L223.0 403.0L223.0 403.0L238.0 416.0L238.0 416.0L253.0 428.6L253.0 428.6L268.0 441.0L263.6 460.7L259.0 480.0L259.0 480.0L255.0 503.6L255.0 503.6L251.8 527.0L250.0 540.0L245.7 561.0L245.7 561.0L241.4 583.0L241.4 583.0L239.3 599.0L239.3 599.0L239.3 599.0L239.3 599.0L239.3 599.0L239.3 599.0L239.3 599.0L239.3 599.0L239.3 599.0L239.3 599.0L239.3 599.0L239.3 599.0L239.3 599.0L239.3 599.0L258.6 608.6L258.6 608.6L284.3 617.0L284.3 617.0L284.3 617.0L284.3 617.0L305.7 617.0L314.3 630.0L310.0 643.0L301.4 658.0L301.4 658.0L301.4 658.0L301.4 658.0L301.4 658.0L301.4 658.0L301.4 658.0L301.4 658.0L301.4 658.0L301.4 658.0L301.4 658.0L301.4 658.0L301.4 658.0L301.4 658.0L301.4 658.0L301.4 658.0L301.4 658.0L301.4 658.0L301.4 658.0L322.9 665.0L322.9 665.0L322.9 665.0L348.6 668.6L348.6 668.6L391.4 670.7L434.3 674.0L466.4 677.0L492.0 680.0L492.0 680.0L492.0 680.0L556.0 676.0L563.0 677.0L563.0 677.0L563.0 677.0L588.6 675.0L620.7 674.0L620.7 674.0L653.0 669.6L674.0 667.5L674.0 667.5L674.0 667.5L695.7 660.0L695.7 660.0L695.7 660.0L695.7 660.0L695.7 660.0L705.0 651.0L705.0 651.0L705.0 651.0L705.0 651.0L705.0 651.0L705.0 651.0L705.0 651.0L705.0 651.0L705.0 651.0L705.0 651.0L705.0 651.0L705.0 651.0L705.0 651.0L695.7 630.0L695.7 630.0L685.0 610.7L685.0 610.7L674.0 593.6L665.7 578.6L665.7 578.6L665.7 578.6L659.0 570.0L658.2 568.6L659.0 569.0L680.7 583.0L697.8 598.0L708.6 610.7L708.6 610.7L717.0 620.0L717.0 628.0L710.7 640.7L710.7 640.7L710.7 640.7L710.7 640.7L707.5 655.7L700.0 668.6L700.0 668.6L693.6 681.0L693.6 681.0L693.6 681.0L693.6 681.0L693.6 681.0L693.6 681.0L693.6 681.0L694.6 690.0L694.6 690.0L694.6 690.0L694.6 690.0L694.6 690.0L694.6 690.0L694.6 690.0L694.6 690.0L694.6 690.0L694.6 690.0L694.6 690.0L694.6 690.0L706.4 695.0L706.4 695.0L706.4 695.0L706.4 695.0L706.4 695.0L706.4 695.0L725.7 694.0L725.7 694.0L725.7 694.0L742.9 690.0L742.9 690.0L742.9 690.0L742.9 690.0L742.9 690.0L742.9 690.0L742.9 690.0L753.6 679.0L753.6 679.0L753.6 679.0L753.6 679.0L762.0 662.0L762.0 662.0L768.6 647.0L768.6 647.0L768.6 647.0L768.6 647.0L770.7 634.0L770.7 634.0L770.7 634.0L770.7 634.0L770.7 634.0L770.7 634.0L766.4 621.4L766.4 621.4L766.4 621.4L766.4 621.4L757.8 608.6L757.8 608.6L757.8 608.6L757.8 608.6L757.8 608.6L757.8 608.6L757.8 608.6L757.8 608.6L757.8 608.6L757.8 608.6L757.8 608.6L757.8 608.6L757.8 608.6L757.8 608.6L757.8 608.6L757.8 608.6L757.8 608.6L757.8 608.6L757.8 608.6L749.0 603.0L736.4 591.4L721.4 577.0L691.4 539.0L691.4 539.0L674.0 520.0L674.0 520.0L657.0 503.0L657.0 503.0L637.8 485.7L637.8 485.7L637.8 485.7L618.6 473.0L618.6 473.0L602.1 463.4L601.4 462.0L595.0 443.0L595.0 443.0L586.0 421.0L586.0 421.0L576.0 404.0L574.0 389.0L576.0 370.0L576.0 370.0L576.0 370.0L576.0 370.0L572.0 346.0L572.0 346.0L572.0 346.0L565.7 331.0L565.7 331.0L565.7 331.0L565.7 331.0L553.0 316.0L553.0 316.0L540.0 301.0L535.7 286.0L535.7 286.0L528.6 270.0L528.6 270.0L520.0 253.0L520.0 253.0L511.0 238.0L505.0 223.0L505.0 223.0L498.6 210.0L499.6 193.0L499.6 193.0L499.6 193.0L497.5 176.8L498.6 173.6L498.6 173.6L498.6 173.6L498.6 173.6L499.6 150.0L499.6 150.0L498.6 128.6L498.6 128.6L495.0 109.0L495.0 109.0L495.0 109.0L495.0 109.0L495.0 109.0L495.0 109.0L495.0 109.0L485.7 98.6L485.7 98.6L485.7 98.6L485.7 98.6L485.7 98.6L466.0 90.0L466.0 90.0L466.0 90.0L453.0 87.0L440.0 82.0L430.0 73.0L423.0 63.0L418.0 53.0L422.0 52.0L422.0 52.0L422.0 52.0L422.0 52.0L422.0 52.0L422.0 52.0L422.0 52.0L422.0 52.0L427.0 45.0L437.0 44.0L437.0 44.0L437.0 44.0L437.0 44.0L437.0 44.0L437.0 44.0L437.0 44.0L445.0 38.0L445.0 38.0L445.0 38.0L445.0 38.0L445.0 38.0L445.0 38.0L445.0 38.0L449.0 28.0L449.0 28.0L449.0 28.0L449.0 28.0L449.0 28.0L449.0 28.0L448.0 17.0L448.0 17.0L448.0 17.0L448.0 17.0L448.0 17.0L448.0 17.0L442.0 7.0L442.0 7.0L442.0 7.0L442.0 7.0L442.0 7.0L430.0 -2.0L430.0 -2.0L430.0 -2.0L430.0 -2.0L430.0 -2.0L430.0 -2.0L430.0 -2.0L430.0 -2.0L420.0 -2.0L420.0 -2.0L420.0 -2.0L420.0 -2.0L420.0 -2.0L420.0 -2.0L410.0 3.0L410.0 3.0L403.0 7.5L397.0 -2.0L397.0 -2.0L397.0 -2.0L397.0 -2.0L397.0 -2.0L397.0 -2.0L397.0 -2.0L397.0 -2.0L397.0 -2.0L397.0 -2.0L397.0 -2.0L337.0 -2.0L337.0 -2.0L337.0 -2.0L337.0 -2.0L337.0 -2.0L337.0 -2.0L337.0 -2.0L337.0 -2.0L337.0 -2.0L337.0 -2.0L330.0 7.0L330.0 7.0L322.0 20.0L322.0 20.0L316.0 33.0L316.0 33.0L316.0 33.0L316.0 33.0L316.0 33.0L315.0 45.0L315.0 45.0L315.0 45.0L315.0 45.0L315.0 45.0L315.0 45.0L315.0 45.0L315.0 45.0L315.0 45.0L315.0 45.0L315.0 45.0L315.0 45.0L315.0 45.0L315.0 45.0L315.0 45.0L315.0 45.0L315.0 45.0L316.0 45.1L320.0 58.0L320.0 58.0ZM91.3 130.2L96.0 132.5L94.4 136.4L86.7 140.2L84.4 140.2L84.4 136.4Z" fill="none" stroke="#fff" stroke-width="1.3" stroke-dasharray="3.5 3.5"/>
</svg><!--/PHOTO--></div>
<div id="hbar" class="a"><div class="st a"></div><div class="t a">.3M</div>
<svg class="a" style="left:84.5px;top:6px" width="10" height="14" viewBox="0 0 10 14"><path d="M2.5 1.5 L7.5 7 L2.5 12.5" fill="none" stroke="#cfcfcf" stroke-width="1.6"/></svg></div>
<div id="vbar" class="a"></div><div id="vline1" class="a"></div><div id="dock" class="a"></div><div id="vline2" class="a"></div>
<div id="right" class="a"></div><div id="vline3" class="a"></div>

<!-- top panel fragment -->
<div class="panel a" style="top:0;height:33px"></div>
<div class="a" style="left:1215px;top:0;width:256px;height:8px;background:#050507"></div>
<div class="a" style="left:1494px;top:0;width:26px;height:8px;background:#e93b2c"></div>
<div class="a" style="left:1237px;top:-9px;width:15px;height:15px;border:1.5px solid #f0f0f0;border-radius:50%"></div>
<div class="a" style="left:1154px;top:33px;width:388px;height:4px;background:#424242"></div>

<!-- Properties panel -->
<div class="tabbar a" style="top:37px">
 <div class="tab on a" style="left:0;width:97px"><span style="left:12px">Properties</span></div>
 <div class="tab a" style="left:97px;width:114px"><span style="left:11.5px">Adjustments</span></div>
 <svg class="a" style="left:366px;top:13px" width="14" height="12" viewBox="0 0 14 12"><path d="M0 1h14M0 4.3h14M0 7.6h14M0 10.9h14" stroke="#b4b4b4" stroke-width="1.5"/></svg>
</div>
<div class="panel a" style="top:75px;height:359px"></div>
<div class="a" style="left:1154px;top:121px;width:388px;height:1.5px;background:#454545"></div>
<div class="a" style="left:1168px;top:83px;width:31px;height:31px;background:#323232;border:1px solid #5e5e5e;border-radius:4px"></div>
<svg class="a" style="left:1176px;top:89px" width="16" height="19" viewBox="0 0 16 19"><path d="M1.2 1.2h8.3l5.3 5.3v11.3H1.2z M9.3 1.4v5.3h5.3" fill="none" stroke="#e4e4e4" stroke-width="1.7" stroke-linejoin="round"/></svg>
<div class="lbl a" style="left:1205.5px;top:90px">Document Properties</div>
<div class="lbl a" style="left:1168.5px;top:135.5px">W: 76.2 cm</div>
<div class="lbl a" style="left:1331px;top:135.5px">H: 76.2 cm</div>
<div class="lbl a" style="left:1171px;top:167px">X: 0</div>
<div class="lbl a" style="left:1331px;top:167px">Y: 0</div>
<div class="a" style="left:1521px;top:123px;width:21px;height:311px;background:#4b4b4b"></div>
<div class="a" style="left:1159px;top:199.5px;width:362px;height:1.5px;background:#454545"></div>
<div class="lbl a" style="left:1163px;top:213.5px">Resolution: 72 pixels/inch</div>
<div class="a" style="left:1154px;top:434px;width:388px;height:5px;background:#424242"></div>

<!-- Layers panel -->
<div class="tabbar a" style="top:439px">
 <div class="tab on a" style="left:0;width:71px"><span style="left:12px">Layers</span></div>
 <div class="tab a" style="left:71px;width:90px"><span style="left:12px">Channels</span></div>
 <div class="tab a" style="left:161px;width:90px"><span style="left:12.5px">Paths</span></div>
</div>
<div class="panel a" style="top:477px;height:123px"></div>
<!-- kind -->
<div class="a" style="left:1158.5px;top:490px;width:120px;height:24.5px;background:#4a4a4a;border:1px solid #5d5d5d;border-radius:3px"></div>
<svg class="a" style="left:1168px;top:494px" width="18" height="18" viewBox="0 0 18 18"><circle cx="7" cy="7" r="4.6" fill="none" stroke="#b9b9b9" stroke-width="1.9"/><path d="M10.3 10.5 L15 15.6" stroke="#b9b9b9" stroke-width="2.6" stroke-linecap="round"/></svg>
<div class="lbl dim a" style="left:1188px;top:493.5px;font-size:14.2px">Kind</div>
<svg class="a" style="left:1263px;top:498px" width="12" height="8" viewBox="0 0 12 8"><path d="M1.5 1.5 L6 6 L10.5 1.5" fill="none" stroke="#6f6f6f" stroke-width="1.4"/></svg>
<svg class="a" style="left:1294px;top:495px" width="17" height="14" viewBox="0 0 17 14"><rect x=".8" y=".8" width="15.4" height="12.4" fill="none" stroke="#b6b6b6" stroke-width="1.5"/><path d="M3 10.5 L5.8 6 L8 9 L10.5 5.5 L14 10.5z" fill="#b6b6b6"/></svg>
<svg class="a" style="left:1328px;top:494.5px" width="16" height="16" viewBox="0 0 16 16"><circle cx="8" cy="8" r="6.9" fill="none" stroke="#b6b6b6" stroke-width="1.5"/><path d="M13 3 A7 7 0 0 1 3 13z" fill="#b6b6b6"/></svg>
<div class="a" style="left:1362.5px;top:495px;width:8px;height:2px;background:#b6b6b6"></div>
<div class="a" style="left:1366px;top:495px;width:2.5px;height:14px;background:#b6b6b6"></div>
<div class="a" style="left:1154px;top:519.5px;width:388px;height:1.5px;background:#464646"></div>
<!-- normal -->
<div class="a" style="left:1158.5px;top:528.5px;width:178px;height:23.5px;background:#4a4a4a;border:1px solid #5d5d5d;border-radius:3px"></div>
<div class="lbl dim a" style="left:1169px;top:532px;font-size:14.2px">Normal</div>
<svg class="a" style="left:1321px;top:538px" width="12" height="8" viewBox="0 0 12 8"><path d="M1.5 1.5 L6 6 L10.5 1.5" fill="none" stroke="#6f6f6f" stroke-width="1.4"/></svg>
<div class="lbl dim a" style="left:1342.5px;top:532px;font-size:14.2px;width:28px;overflow:hidden;color:#7c7c7c">Opa</div>
<div class="a" style="left:1154px;top:558px;width:388px;height:1.5px;background:#464646"></div>
<!-- lock row -->
<div class="lbl a" style="left:1160.5px;top:569.5px;font-size:14.2px;color:#858585;-webkit-text-stroke:0">Lock:</div>
<svg class="a" style="left:1204px;top:570px" width="16" height="16" viewBox="0 0 16 16"><rect x=".7" y=".7" width="14.6" height="14.6" fill="#a8a8a8"/><path d="M2 2h4v4H2zM10 2h4v4h-4zM6 6h4v4H6zM2 10h4v4H2zM10 10h4v4h-4z" fill="#535353"/></svg>
<svg class="a" style="left:1233px;top:569px" width="19" height="20" viewBox="0 0 19 20"><path d="M17.5 1 C14 4 10.5 8.5 8.6 11.6 L10.8 13.4 C13.5 10.5 16.5 5.5 18.2 1.6z" fill="#b2b2b2"/><path d="M7.8 12.4 C5 12.2 3.6 14.2 3.2 16 C2.9 17.4 1.6 18.2 .6 18.4 C3.5 19.8 8.8 18.8 10 14.2z" fill="#b2b2b2"/></svg>
<svg class="a" style="left:1262.5px;top:569px" width="18" height="18" viewBox="0 0 18 18"><path d="M9 .5 L12 4 H10 V8 H14 V6 L17.5 9 L14 12 V10 H10 V14 H12 L9 17.5 L6 14 H8 V10 H4 V12 L.5 9 L4 6 V8 H8 V4 H6z" fill="#b2b2b2"/></svg>
<svg class="a" style="left:1292.5px;top:570.5px" width="21" height="19" viewBox="0 0 21 19"><path d="M4 0v18M0 4h14M0 15h20M17 9v9" stroke="#b2b2b2" stroke-width="1.4" fill="none"/><path d="M4 4h7.5l5.5 5.2" stroke="#b2b2b2" stroke-width="1.4" fill="none"/><path d="M11 4.2v5h5.6" stroke="#b2b2b2" stroke-width="1.2" fill="none"/><path d="M16 1.5l1 1M18.5 4l1 1" stroke="#b2b2b2" stroke-width="1.2"/></svg>
<svg class="a" style="left:1325.5px;top:570.5px" width="15" height="17" viewBox="0 0 15 17"><path d="M3.6 7.5V5a3.9 3.9 0 0 1 7.8 0v2.5" fill="none" stroke="#b2b2b2" stroke-width="1.8"/><rect x=".5" y="7" width="14" height="9.6" rx=".8" fill="#b2b2b2"/><rect x="6.3" y="10.4" width="2.4" height="2.6" fill="#535353"/></svg>
<!-- layer row -->
<div class="a" style="left:1154px;top:600px;width:388px;height:1px;background:#454545"></div>
<div class="a" style="left:1196px;top:601px;width:346px;height:56px;background:#696969"></div>
<div class="a" style="left:1195px;top:601px;width:1px;height:56px;background:#4a4a4a"></div>
<div class="panel a" style="top:601px;height:56px;width:41px"></div>
<svg class="a" style="left:1165px;top:622.5px" width="20" height="14" viewBox="0 0 20 14"><path d="M.6 7 C3.5 2.2 7 .6 10 .6 S16.5 2.2 19.4 7 C16.5 11.8 13 13.4 10 13.4 S3.5 11.8 .6 7z" fill="#ededed"/><circle cx="10" cy="6.4" r="4" fill="#555"/><circle cx="11.4" cy="5" r="1.2" fill="#ededed"/></svg>
<div class="a" id="thumb" style="left:1200px;top:607px;width:44px;height:44.5px;background:#e9e7e1;border:1.5px solid #1c1c1c;border-radius:1.5px;overflow:hidden"><!--THUMB--><svg width="41" height="41.5" viewBox="52 -32 738 747" style="display:block"><use href="#figall"/></svg><!--/THUMB--></div>
<div class="lbl a" style="left:1255px;top:619.5px;color:#ececec">Background</div>
<div class="a" style="left:1154px;top:657px;width:388px;height:147.5px;background:#4a4a4a"></div>
<!-- bottom toolbar -->
<div class="a" style="left:1154px;top:804.5px;width:388px;height:1px;background:#424242"></div>
<div class="a" style="left:1154px;top:805.5px;width:388px;height:32.5px;background:#515151"></div>
<div class="a" style="left:1154px;top:838px;width:388px;height:2px;background:#434343"></div>
<div class="a" style="left:1368px;top:804.5px;width:35px;height:36px;background:#3e3e3e;border:1px solid #595959;border-bottom:none"></div>
<!--ICONS-->
<svg class="a" style="left:1265px;top:816px" width="21" height="12" viewBox="0 0 21 12"><path d="M8.6 1H5.8a4.8 4.8 0 0 0 0 9.6H8.6M12.4 1h2.8a4.8 4.8 0 0 1 0 9.6H12.4" fill="none" stroke="#8e8e8e" stroke-width="1.9"/><rect x="5.5" y="4.7" width="10" height="2.2" fill="#8e8e8e"/></svg>
<div class="a" style="left:1304.5px;top:808px;font-style:italic;font-size:19px;color:#8e8e8e;letter-spacing:-.8px;line-height:24px">fx</div>
<div class="a" style="left:1320px;top:829px;width:2px;height:2px;background:#777"></div>
<svg class="a" style="left:1339px;top:814px" width="19" height="14" viewBox="0 0 19 14"><rect x="0" y="0" width="18.6" height="13.7" rx="1" fill="#dadada"/><circle cx="9.3" cy="6.9" r="4.2" fill="#505050"/></svg>
<svg class="a" style="left:1378px;top:812.5px" width="18" height="18" viewBox="0 0 18 18"><circle cx="8.8" cy="8.8" r="7.4" fill="none" stroke="#d6d6d6" stroke-width="1.6"/><path d="M14.4 3.6 A7.6 7.6 0 0 1 3.6 14.4z" fill="#d6d6d6"/></svg>
<svg class="a" style="left:1393.5px;top:831px" width="7" height="4" viewBox="0 0 7 4"><path d="M0 0h6.4L3.2 3.8z" fill="#efefef"/></svg>
<svg class="a" style="left:1414px;top:813px" width="18" height="15" viewBox="0 0 18 15"><path d="M.5 1.2h8.2v1.6H.5z" fill="#d0d0d0"/><rect x=".3" y="3.4" width="17.4" height="11.2" rx=".8" fill="#d4d4d4"/></svg>
<svg class="a" style="left:1452px;top:814.5px" width="16" height="16" viewBox="0 0 16 16"><path d="M1.2 1.2h13.2v13.2H6.2L1.2 9.6z" fill="#2c2c2c" stroke="#e2e2e2" stroke-width="1.7" stroke-linejoin="round"/><path d="M1.4 9.4h5v5" fill="#e2e2e2" stroke="#e2e2e2" stroke-width="1.2"/></svg>
<svg class="a" style="left:1488.5px;top:813.5px" width="16" height="18" viewBox="0 0 16 18"><path d="M.5 4.3h15M5 4V1.4h6V4" fill="none" stroke="#8b8b8b" stroke-width="1.6"/><path d="M2.2 5.2l.7 11.6h10.2l.7-11.6" fill="none" stroke="#8b8b8b" stroke-width="1.6"/><path d="M5.7 7v8M8 7v8M10.3 7v8" stroke="#8b8b8b" stroke-width="1.3"/></svg>
<!--/ICONS-->
<!-- menu -->
<div id="menu" class="a"><div class="hi a"></div>
<!--ITEMS--><div class="mi a" style="top:12.45px;color:#fff">Solid Color...</div>
<div class="mi a" style="top:41.20px">Gradient...</div>
<div class="mi a" style="top:69.95px">Pattern...</div>
<div class="sep a" style="top:100.20px"></div>
<div class="mi a" style="top:113.70px">Brightness/Contrast...</div>
<div class="mi a" style="top:142.45px">Levels...</div>
<div class="mi a" style="top:171.20px">Curves...</div>
<div class="mi a" style="top:199.95px">Exposure...</div>
<div class="sep a" style="top:230.20px"></div>
<div class="mi a" style="top:243.70px">Vibrance...</div>
<div class="mi a" style="top:272.45px">Hue/Saturation...</div>
<div class="mi a" style="top:301.20px">Color Balance...</div>
<div class="mi a" style="top:329.95px">Black &amp; White...</div>
<div class="mi a" style="top:358.70px">Photo Filter...</div>
<div class="mi a" style="top:387.45px">Channel Mixer...</div>
<div class="mi a" style="top:416.20px">Color Lookup...</div>
<div class="sep a" style="top:446.45px"></div>
<div class="mi a" style="top:459.95px">Invert</div>
<div class="mi a" style="top:488.70px">Posterize...</div>
<div class="mi a" style="top:517.45px">Threshold...</div>
<div class="mi a" style="top:546.20px">Gradient Map...</div>
<div class="mi a" style="top:574.95px">Selective Color...</div><!--/ITEMS-->
</div>
</body></html>
